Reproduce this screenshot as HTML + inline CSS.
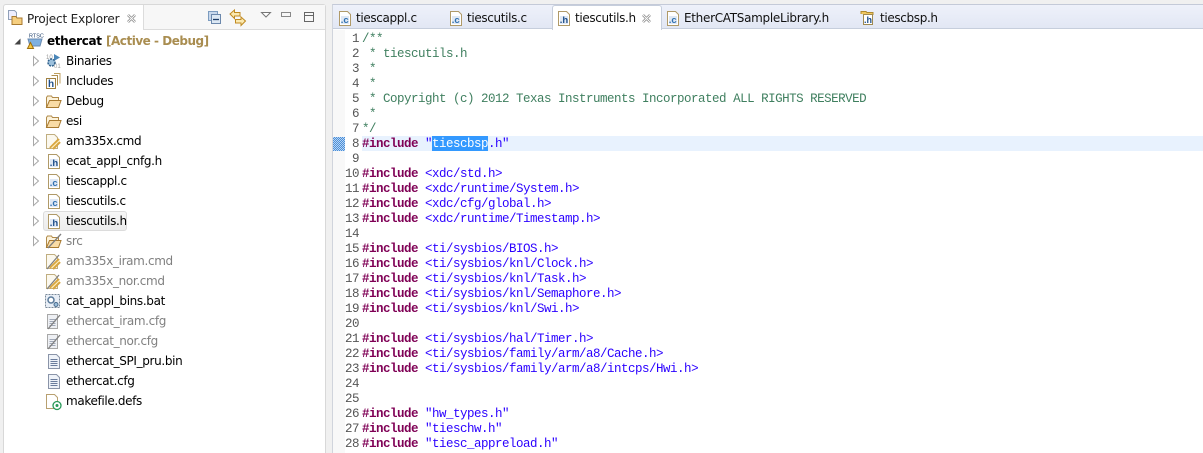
<!DOCTYPE html>
<html><head><meta charset="utf-8"><style>
html,body{margin:0;padding:0;background:#fff}
#r{position:relative;width:1203px;height:453px;overflow:hidden;background:#f0f0f0;font-family:"DejaVu Sans","Liberation Sans",sans-serif}
.a{position:absolute}
.t{position:absolute;font-size:12px;line-height:20px;white-space:nowrap;color:#000;letter-spacing:-.35px;left:66px}
.g{color:#808080}
.tab{position:absolute;top:8px;font-size:12px;line-height:20px;white-space:nowrap;color:#111;letter-spacing:-.35px}
.c{position:absolute;left:362px;font:12.5px/15px "Liberation Mono",monospace;letter-spacing:-.5px;white-space:pre;color:#2a00ff}
.n{position:absolute;left:333px;width:26px;text-align:right;font:12.5px/15px "Liberation Mono",monospace;letter-spacing:-.5px;color:#555}
.k{color:#7f0055;font-weight:bold}.m{color:#3f7f5f}
svg{position:absolute;overflow:visible}
</style></head><body><div id="r">
<svg width="0" height="0"><defs>
<g id="tri"><path d="M.5.5 5.5 5 .5 9.5Z" fill="#fff" stroke="#a8a8a8"/></g>
<g id="x"><path d="M1 1 8 8M8 1 1 8" stroke="#8a8a8a" stroke-width="2.600" fill="none"/><path d="M1 1 8 8M8 1 1 8" stroke="#fff" stroke-width=".9" fill="none"/></g>
<g id="fo"><path d="M.5 13.500V3.500l1-1.500h4l1 1.500h6v3" fill="#fdf3dc" stroke="#b08a48"/><path d="M.5 13.500h12l2.500-7H3.500Z" fill="#f9dca6" stroke="#a87a30"/></g>
<g id="fh"><path d="M.5.5h8l3 3v11H.5Z" fill="#fff" stroke="#b09a68"/><rect x="2" y="5" width="8" height="8" fill="#dfe8f4"/><text x="1.700" y="12" font-family="Liberation Sans" font-size="9.500" font-weight="bold" fill="#1f4f8a">.h</text></g>
<g id="fc"><path d="M.5.5h8l3 3v11H.5Z" fill="#fff" stroke="#b09a68"/><rect x="2" y="5" width="8" height="8" fill="#dfe8f4"/><text x="1.700" y="12" font-family="Liberation Sans" font-size="9.500" font-weight="bold" fill="#2f70b0">.c</text></g>
<g id="cmd"><path d="M.5.5h8l3 3v11H.5Z" fill="#fbf8ee" stroke="#c0ae80"/><path d="M4 14 13 5M7 15l7-7" stroke="#d8a640" stroke-width="2.200"/><path d="M5.500 14 13.500 6.500" stroke="#fff0c0"/></g>
<g id="tx"><path d="M.5.5h8l3 3v11H.5Z" fill="#eef2f8" stroke="#8a94a8"/><path d="M2.500 5.500h7M2.500 7.500h7M2.500 9.500h7M2.500 11.500h7" stroke="#6a7c9c"/></g>
<g id="cf"><path d="M.5.5h10v14H.5Z" fill="#eef0f4" stroke="#a8a8a8"/><path d="M2.500 5.500h6M2.500 7.500h6M2.500 9.500h6M2.500 11.500h6" stroke="#a0a8b8"/><path d="M1 15 13 1" stroke="#808080" stroke-width="1.300"/></g>
</defs></svg>

<!-- left panel -->
<div class="a" style="left:3px;top:4px;width:323px;height:449px;background:#fff;border:1px solid #d8d8d8;border-bottom:0;border-radius:3px 3px 0 0;box-sizing:border-box"></div>
<div class="a" style="left:144px;top:5px;width:181px;height:24px;background:#f7f7f7"></div>
<div class="a" style="left:144px;top:29px;width:181px;height:1px;background:#dcdcdc"></div>
<div class="a" style="left:143px;top:5px;width:1px;height:25px;background:#dcdcdc"></div>
<svg style="left:7px;top:10px" width="16" height="16"><path d="M1.500.5h6l2 2v7h-8Z" fill="#eef" stroke="#90a0b8"/><path d="M5 8.500V6.500h4l1 1.500h5v6.500H5Z" fill="#f6cf80" stroke="#a87a30"/></svg>
<div class="t" style="left:27px;top:9px;color:#222;letter-spacing:-.15px">Project Explorer</div>
<svg style="left:127px;top:14px" width="9" height="9"><use href="#x"/></svg>
<svg style="left:208px;top:11px" width="14" height="14"><rect x=".5" y=".5" width="9" height="9" fill="#c8d8ec" stroke="#7c9cc0"/><rect x="3.500" y="3.500" width="9" height="9" fill="#dce8f4" stroke="#6c88ac"/><path d="M5 8.500h6" stroke="#1f3f6a" stroke-width="1.300"/></svg>
<svg style="left:229px;top:9px" width="18" height="17"><path d="M1 5 5.500 1V3.500H11V7H5.500V9.500ZM16.500 12 12 8V10.500H6.500V14H12V16.500Z" fill="#fbe9b0" stroke="#c08a20"/></svg>
<svg style="left:261px;top:12px" width="11" height="6"><path d="M.5.500h9L5 5Z" fill="#fff" stroke="#777"/></svg>
<div class="a" style="left:281px;top:12px;width:8px;height:3px;border:1px solid #888"></div>
<svg style="left:304px;top:12px" width="11" height="11"><path d="M.5.5h9v9h-9ZM.5 3.500h9" fill="none" stroke="#666"/></svg>

<svg style="left:14px;top:38px" width="7" height="7"><path d="M6.500.500V6.500H.5Z" fill="#444"/></svg>
<svg style="left:27px;top:33px" width="17" height="17"><text x="2" y="4.500" font-family="Liberation Sans" font-size="5.500" fill="#1f3f6a">RTSC</text><path d="M1 6h14l-2 7H3Z" fill="#7fb0e0" stroke="#6a8ab0"/><path d="M3.500 9.500 6.500 15.500H.5Z" fill="#f6c840" stroke="#a07010"/></svg>
<div class="t" style="left:47px;top:31px;font-weight:bold">ethercat</div>
<div class="t" style="left:106px;top:31px;font-weight:bold;color:#a98d50;letter-spacing:-.48px">[Active - Debug]</div>

<svg style="left:33px;top:56px" width="6" height="10"><use href="#tri"/></svg>
<svg style="left:33px;top:76px" width="6" height="10"><use href="#tri"/></svg>
<svg style="left:33px;top:96px" width="6" height="10"><use href="#tri"/></svg>
<svg style="left:33px;top:116px" width="6" height="10"><use href="#tri"/></svg>
<svg style="left:33px;top:136px" width="6" height="10"><use href="#tri"/></svg>
<svg style="left:33px;top:156px" width="6" height="10"><use href="#tri"/></svg>
<svg style="left:33px;top:176px" width="6" height="10"><use href="#tri"/></svg>
<svg style="left:33px;top:196px" width="6" height="10"><use href="#tri"/></svg>
<svg style="left:33px;top:216px" width="6" height="10"><use href="#tri"/></svg>
<svg style="left:33px;top:236px" width="6" height="10"><use href="#tri"/></svg>

<svg style="left:45px;top:53px" width="17" height="16"><text x="1" y="6" font-family="Liberation Sans" font-size="6" fill="#999">10</text><text x="9" y="15" font-family="Liberation Sans" font-size="6" fill="#999">01</text><path d="M9 1v7l6-3.500Z" fill="#4a86b8"/><circle cx="6.500" cy="9.500" r="3.500" fill="#9cc0dc" stroke="#2f5f8a" stroke-width="1.500" stroke-dasharray="2 1"/></svg>
<svg style="left:46px;top:73px" width="16" height="16"><path d="M8 .5h6v10" fill="none" stroke="#c0a060"/><path d="M5.500 2.500h6v10" fill="none" stroke="#b09050"/><rect x=".5" y="5.500" width="9" height="10" fill="#fff" stroke="#a08040"/><text x="2" y="14" font-family="Liberation Sans" font-size="10" font-weight="bold" fill="#1f4f8a">h</text></svg>
<svg style="left:46px;top:94px" width="16" height="15"><use href="#fo"/></svg>
<svg style="left:46px;top:114px" width="16" height="15"><use href="#fo"/></svg>
<svg style="left:46px;top:134px" width="16" height="16"><use href="#cmd"/></svg>
<svg style="left:48px;top:154px" width="13" height="15"><use href="#fh"/></svg>
<svg style="left:48px;top:174px" width="13" height="15"><use href="#fc"/></svg>
<svg style="left:48px;top:194px" width="13" height="15"><use href="#fc"/></svg>
<div class="a" style="left:43px;top:211px;width:84px;height:20px;background:linear-gradient(#f6f6f6,#ececec);border:1px solid #dcdcdc;border-radius:3px;box-sizing:border-box"></div>
<svg style="left:48px;top:214px" width="13" height="15"><use href="#fh"/></svg>
<svg style="left:46px;top:234px" width="16" height="15"><use href="#fo"/><path d="M2 14 15 0" stroke="#808080" stroke-width="1.300"/></svg>
<svg style="left:46px;top:254px" width="16" height="16"><use href="#cmd"/><path d="M1 15 13 1" stroke="#808080" stroke-width="1.300"/></svg>
<svg style="left:46px;top:274px" width="16" height="16"><use href="#cmd"/><path d="M1 15 13 1" stroke="#808080" stroke-width="1.300"/></svg>
<svg style="left:45px;top:294px" width="16" height="15"><rect x=".5" y=".5" width="14" height="13" fill="#e8eef6" stroke="#7a8a9a" stroke-dasharray="2 1"/><circle cx="6" cy="6" r="3" fill="#fff" stroke="#5a7a9a" stroke-width="1.500"/><circle cx="11" cy="10.500" r="2" fill="#9cc0dc" stroke="#4a6a8a"/></svg>
<svg style="left:47px;top:314px" width="14" height="16"><use href="#cf"/></svg>
<svg style="left:47px;top:334px" width="14" height="16"><use href="#cf"/></svg>
<svg style="left:48px;top:354px" width="13" height="15"><use href="#tx"/></svg>
<svg style="left:48px;top:374px" width="13" height="15"><use href="#tx"/></svg>
<svg style="left:46px;top:394px" width="16" height="16"><path d="M.5.5h8l3 3v11H.5Z" fill="#fff" stroke="#b8a070"/><circle cx="11" cy="11.500" r="4" fill="#fff" stroke="#2a9a5a" stroke-width="1.300"/><circle cx="11" cy="11.500" r="1.500" fill="#2a9a5a"/></svg>

<div class="t" style="top:51px">Binaries</div>
<div class="t" style="top:71px">Includes</div>
<div class="t" style="top:91px">Debug</div>
<div class="t" style="top:111px">esi</div>
<div class="t" style="top:131px">am335x.cmd</div>
<div class="t" style="top:151px">ecat_appl_cnfg.h</div>
<div class="t" style="top:171px">tiescappl.c</div>
<div class="t" style="top:191px">tiescutils.c</div>
<div class="t" style="top:211px">tiescutils.h</div>
<div class="t g" style="top:231px">src</div>
<div class="t g" style="top:251px">am335x_iram.cmd</div>
<div class="t g" style="top:271px">am335x_nor.cmd</div>
<div class="t" style="top:291px">cat_appl_bins.bat</div>
<div class="t g" style="top:311px">ethercat_iram.cfg</div>
<div class="t g" style="top:331px">ethercat_nor.cfg</div>
<div class="t" style="top:351px">ethercat_SPI_pru.bin</div>
<div class="t" style="top:371px">ethercat.cfg</div>
<div class="t" style="top:391px">makefile.defs</div>

<!-- editor -->
<div class="a" style="left:332px;top:4px;width:871px;height:449px;background:#fff;border-left:1px solid #d0d4dc;border-top:1px solid #c4cad8;box-sizing:border-box"></div>
<div class="a" style="left:333px;top:5px;width:870px;height:24px;background:linear-gradient(#eef1fa,#e2e7f4);border-bottom:1px solid #c6cedc;box-sizing:border-box"></div>
<div class="a" style="left:552px;top:5px;width:110px;height:25px;background:#fff;border:1px solid #c6cedc;border-bottom:0;border-radius:3px 3px 0 0;box-sizing:border-box"></div>
<svg style="left:339px;top:11px" width="13" height="15"><use href="#fc"/></svg>
<svg style="left:450px;top:11px" width="13" height="15"><use href="#fc"/></svg>
<svg style="left:558px;top:11px" width="13" height="15"><use href="#fh"/></svg>
<svg style="left:667px;top:11px" width="13" height="15"><use href="#fc"/></svg>
<svg style="left:860px;top:10px" width="15" height="16"><path d="M1 4V1.500h5l1 1h6V5" fill="#f0c860" stroke="#b08a30"/><rect x="3.500" y="4.500" width="9" height="10" fill="#fff" stroke="#a08a50"/><text x="4" y="13" font-family="Liberation Sans" font-size="9" font-weight="bold" fill="#1f4f8a">.h</text></svg>
<div class="tab" style="left:356px">tiescappl.c</div>
<div class="tab" style="left:467px">tiescutils.c</div>
<div class="tab" style="left:575px">tiescutils.h</div>
<svg style="left:642px;top:14px" width="9" height="9"><use href="#x"/></svg>
<div class="tab" style="left:684px;letter-spacing:-.3px">EtherCATSampleLibrary.h</div>
<div class="tab" style="left:880px">tiescbsp.h</div>

<div class="a" style="left:333px;top:30px;width:12px;height:423px;background:#f8f8f8"></div>
<div class="a" style="left:362px;top:136px;width:841px;height:15px;background:#e8f2fe"></div>
<div class="a" style="left:333px;top:137px;width:12px;height:14px;background:repeating-conic-gradient(#4a8fd8 0 25%,#b8d4f4 0 50%) 0 0/2px 2px"></div>
<div class="a" style="left:432px;top:136px;width:56px;height:15px;background:#3399ff"></div>

<div class="n" style="top:32px">1</div><div class="n" style="top:47px">2</div><div class="n" style="top:62px">3</div><div class="n" style="top:77px">4</div><div class="n" style="top:92px">5</div><div class="n" style="top:107px">6</div><div class="n" style="top:122px">7</div><div class="n" style="top:137px">8</div><div class="n" style="top:152px">9</div><div class="n" style="top:167px">10</div><div class="n" style="top:182px">11</div><div class="n" style="top:197px">12</div><div class="n" style="top:212px">13</div><div class="n" style="top:227px">14</div><div class="n" style="top:242px">15</div><div class="n" style="top:257px">16</div><div class="n" style="top:272px">17</div><div class="n" style="top:287px">18</div><div class="n" style="top:302px">19</div><div class="n" style="top:317px">20</div><div class="n" style="top:332px">21</div><div class="n" style="top:347px">22</div><div class="n" style="top:362px">23</div><div class="n" style="top:377px">24</div><div class="n" style="top:392px">25</div><div class="n" style="top:407px">26</div><div class="n" style="top:422px">27</div><div class="n" style="top:437px">28</div>

<div class="c m" style="top:32px">/**</div>
<div class="c m" style="top:47px"> * tiescutils.h</div>
<div class="c m" style="top:62px"> *</div>
<div class="c m" style="top:77px"> *</div>
<div class="c m" style="top:92px"> * Copyright (c) 2012 Texas Instruments Incorporated ALL RIGHTS RESERVED</div>
<div class="c m" style="top:107px"> *</div>
<div class="c m" style="top:122px">*/</div>
<div class="c" style="top:137px"><span class="k">#include</span> "<span style="color:#fff">tiescbsp</span>.h"</div>
<div class="c" style="top:167px"><span class="k">#include</span> &lt;xdc/std.h&gt;</div>
<div class="c" style="top:182px"><span class="k">#include</span> &lt;xdc/runtime/System.h&gt;</div>
<div class="c" style="top:197px"><span class="k">#include</span> &lt;xdc/cfg/global.h&gt;</div>
<div class="c" style="top:212px"><span class="k">#include</span> &lt;xdc/runtime/Timestamp.h&gt;</div>
<div class="c" style="top:242px"><span class="k">#include</span> &lt;ti/sysbios/BIOS.h&gt;</div>
<div class="c" style="top:257px"><span class="k">#include</span> &lt;ti/sysbios/knl/Clock.h&gt;</div>
<div class="c" style="top:272px"><span class="k">#include</span> &lt;ti/sysbios/knl/Task.h&gt;</div>
<div class="c" style="top:287px"><span class="k">#include</span> &lt;ti/sysbios/knl/Semaphore.h&gt;</div>
<div class="c" style="top:302px"><span class="k">#include</span> &lt;ti/sysbios/knl/Swi.h&gt;</div>
<div class="c" style="top:332px"><span class="k">#include</span> &lt;ti/sysbios/hal/Timer.h&gt;</div>
<div class="c" style="top:347px"><span class="k">#include</span> &lt;ti/sysbios/family/arm/a8/Cache.h&gt;</div>
<div class="c" style="top:362px"><span class="k">#include</span> &lt;ti/sysbios/family/arm/a8/intcps/Hwi.h&gt;</div>
<div class="c" style="top:407px"><span class="k">#include</span> "hw_types.h"</div>
<div class="c" style="top:422px"><span class="k">#include</span> "tieschw.h"</div>
<div class="c" style="top:437px"><span class="k">#include</span> "tiesc_appreload.h"</div>
</div></body></html>
